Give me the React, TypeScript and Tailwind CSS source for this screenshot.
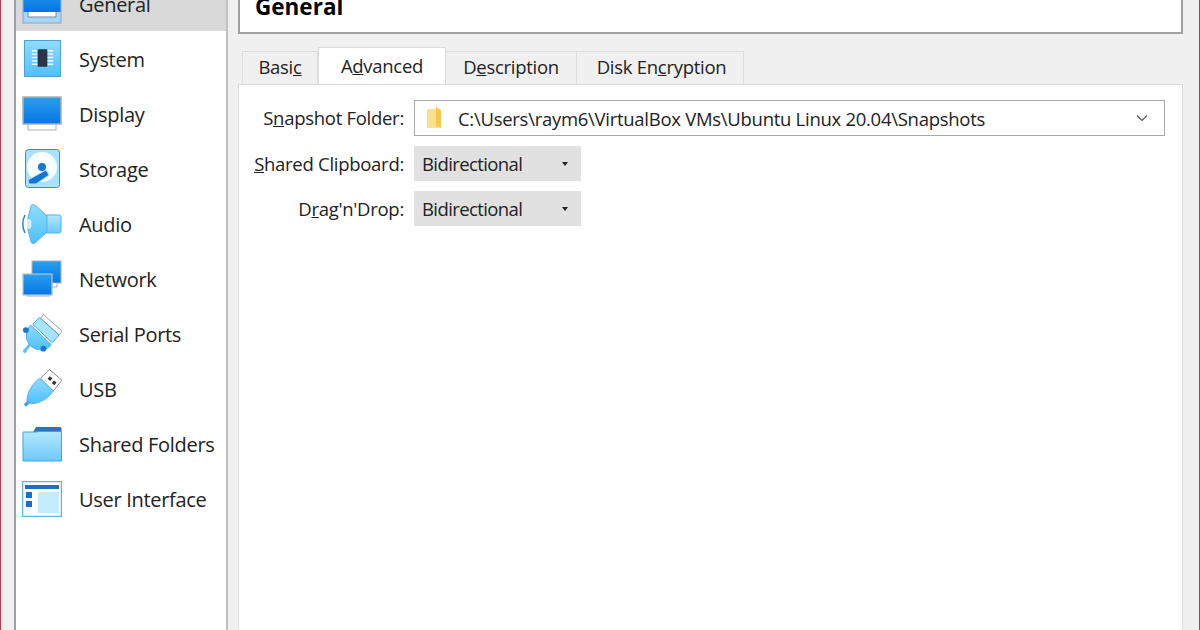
import { ReactNode } from "react";

const FONT = "font-['Open_Sans','Noto_Sans',sans-serif]";

function Defs() {
  return (
    <svg width="0" height="0" className="absolute">
      <defs>
        <linearGradient id="deep" x1="0" y1="0" x2="0" y2="1">
          <stop offset="0" stopColor="#2aa0ee" />
          <stop offset="1" stopColor="#0576e6" />
        </linearGradient>
        <linearGradient id="pale" x1="0" y1="0" x2="0" y2="1">
          <stop offset="0" stopColor="#8fdcff" />
          <stop offset="1" stopColor="#4fc0fb" />
        </linearGradient>
        <linearGradient id="pale2" x1="0" y1="0" x2="0" y2="1">
          <stop offset="0" stopColor="#b4e8ff" />
          <stop offset="1" stopColor="#6cc9fb" />
        </linearGradient>
      </defs>
    </svg>
  );
}

function GeneralIcon() {
  return (
    <svg width="40" height="42" viewBox="0 0 40 42">
      <rect x="1" y="1" width="38" height="39" fill="#a9d6f7" stroke="#8ba6bb" />
      <rect x="1.5" y="1" width="37" height="28" fill="url(#deep)" />
      <path d="M6 29v5h28v-5" fill="#fff" stroke="#6d8ba3" />
    </svg>
  );
}

function SystemIcon() {
  return (
    <svg width="37" height="37" viewBox="0 0 38 38">
      <rect x="0.5" y="0.5" width="37" height="37" fill="url(#pale)" stroke="#4a9fd8" />
      <path d="M8 11h22M8 14.5h22M8 18h22M8 21.5h22M8 25h22" stroke="#f4fbff" strokeWidth="1.5" />
      <rect x="14" y="9.5" width="10" height="18" rx="1" fill="#2a3442" />
    </svg>
  );
}

function DisplayIcon() {
  return (
    <svg width="40" height="35" viewBox="0 0 40 35">
      <rect x="6" y="27" width="28" height="7" fill="#fff" stroke="#a9b0b5" />
      <rect x="1" y="1" width="38" height="27" fill="url(#deep)" stroke="#a9b0b5" strokeWidth="1.5" />
    </svg>
  );
}

function StorageIcon() {
  return (
    <svg width="35" height="39" viewBox="0 0 35 39">
      <rect x="0.5" y="0.5" width="34" height="38" rx="3" fill="#a8e2ff" stroke="#2f8fd8" />
      <circle cx="17" cy="18" r="15" fill="#f8fdff" />
      <circle cx="17" cy="18" r="4" fill="#1677d2" />
      <path d="M3 31 L21 21 L24 26 L11 35 H4 Z" fill="#1677d2" stroke="#a8e2ff" />
    </svg>
  );
}

function AudioIcon() {
  return (
    <svg width="40" height="40" viewBox="0 0 40 40">
      <path d="M3 11 C0 17 0 23 3 29" fill="none" stroke="#2b86d4" strokeWidth="1.5" />
      <path d="M24 11h13a2 2 0 0 1 2 2v14a2 2 0 0 1-2 2H24z" fill="url(#pale2)" stroke="#52b1ee" />
      <path d="M9 2 C10 0 12 0 14 2 L25 12 V28 L14 38 C12 40 10 40 9 38 L6 26 V14Z" fill="url(#pale)" stroke="#52b1ee" />
      <ellipse cx="7" cy="20" rx="2.5" ry="5" fill="#cfefff" />
    </svg>
  );
}

function NetworkIcon() {
  return (
    <svg width="40" height="38" viewBox="0 0 40 38">
      <rect x="10" y="1" width="29" height="22" fill="url(#deep)" stroke="#a9b0b5" />
      <path d="M30 23v4h5v-4" fill="#fff" stroke="#a9b0b5" />
      <rect x="5" y="29" width="22" height="7" fill="#fff" stroke="#a9b0b5" />
      <rect x="1" y="14" width="29" height="21" fill="url(#deep)" stroke="#fff" strokeWidth="0.5" />
      <rect x="1" y="14" width="29" height="21" fill="none" stroke="#a9b0b5" />
    </svg>
  );
}

function SerialIcon() {
  return (
    <svg width="41" height="40" viewBox="0 0 41 40">
      <path d="M22 0 L41 17 L38 21 L19 4Z" fill="#fff" stroke="#9aa5ad" />
      <path d="M18 3 L38 21 L31 29 L11 10Z" fill="#a8e4ff" stroke="#3f9fe0" />
      <path d="M9 11 L30 31 C24 39 12 37 7 30 C3 24 4 16 9 11Z" fill="url(#pale)" stroke="#4aa8e8" />
      <circle cx="4" cy="16" r="3" fill="#1b78d0" />
      <circle cx="22" cy="35" r="3" fill="#1b78d0" />
      <path d="M8 31 L3 37" stroke="#62bff5" strokeWidth="3" />
      <circle cx="3" cy="37.5" r="2" fill="#62bff5" />
    </svg>
  );
}

function UsbIcon() {
  return (
    <svg width="41" height="40" viewBox="0 0 41 40">
      <path d="M28 0 L41 11 L32 22 L19 9Z" fill="#fff" stroke="#7b858c" />
      <rect x="27" y="7" width="3.5" height="3.5" fill="#333" transform="rotate(40 28 9)" />
      <rect x="31" y="12" width="3.5" height="3.5" fill="#333" transform="rotate(40 33 14)" />
      <path d="M18 9 L32 22 C27 30 18 35 9 35 L5 32 C5 24 10 15 18 9Z" fill="url(#pale)" stroke="#5ab6ee" />
      <path d="M7 33 L3 37" stroke="#3ea6ea" strokeWidth="3.5" />
    </svg>
  );
}

function FolderIcon() {
  return (
    <svg width="40" height="36" viewBox="0 0 40 36">
      <path d="M14 1 H38 a1.5 1.5 0 0 1 1.5 1.5 V8 H10Z" fill="#2a72c8" />
      <path d="M1 6 H14 L17 5.5 H39.5 V35 H1Z" fill="url(#pale2)" stroke="#3fa3e6" />
    </svg>
  );
}

function InterfaceIcon() {
  return (
    <svg width="40" height="36" viewBox="0 0 40 36">
      <rect x="0.5" y="0.5" width="39" height="35" fill="#fff" stroke="#62b4ea" strokeWidth="1.5" />
      <rect x="3" y="4" width="34" height="4" fill="#1b6fc4" />
      <rect x="4" y="11" width="6" height="6" fill="#1b6fc4" />
      <rect x="4" y="20" width="6" height="6" fill="#1b6fc4" />
      <rect x="16" y="11" width="21" height="21" fill="#c4ecff" />
    </svg>
  );
}

const items: { label: string; icon: ReactNode; selected?: boolean }[] = [
  { label: "General", icon: <GeneralIcon />, selected: true },
  { label: "System", icon: <SystemIcon /> },
  { label: "Display", icon: <DisplayIcon /> },
  { label: "Storage", icon: <StorageIcon /> },
  { label: "Audio", icon: <AudioIcon /> },
  { label: "Network", icon: <NetworkIcon /> },
  { label: "Serial Ports", icon: <SerialIcon /> },
  { label: "USB", icon: <UsbIcon /> },
  { label: "Shared Folders", icon: <FolderIcon /> },
  { label: "User Interface", icon: <InterfaceIcon /> },
];

function SideItem({ label, icon, selected }: { label: string; icon: ReactNode; selected?: boolean }) {
  return (
    <div className={`flex h-[55px] shrink-0 items-center ${selected ? "bg-[#d9d9d9]" : ""}`}>
      <div className="ml-[6px] mr-[17px] flex w-[40px] shrink-0 justify-center">{icon}</div>
      <span className="pt-[2px] text-[20px] tracking-[-0.3px] text-[#222] whitespace-nowrap">{label}</span>
    </div>
  );
}

function Tab({ children, active, className }: { children: ReactNode; active?: boolean; className: string }) {
  return (
    <div
      className={`flex items-center justify-center border-x border-t border-[#dcdcdc] ${
        active ? "h-[37px] bg-white" : "h-[33px] bg-[#f0f0f0] pb-[2px]"
      } ${className}`}
    >
      {children}
    </div>
  );
}

function Pick() {
  return (
    <div className="flex h-[35px] w-[167px] items-center justify-between bg-[#e1e1e1] pl-[8px] pr-[13px]">
      <span className="pt-[1px] tracking-[-0.6px]">Bidirectional</span>
      <span className="h-0 w-0 border-x-[3px] border-t-[4px] border-x-transparent border-t-[#222]" />
    </div>
  );
}

export default function App() {
  return (
    <div className={`flex h-[630px] w-[1200px] overflow-hidden border-x border-x-[#c8304a] bg-[#f0f0f0] text-[18.5px] tracking-[-0.28px] text-[#222] ${FONT}`}>
      <Defs />
      {/* settings list */}
      <div className="ml-[13px] h-full w-[214px] shrink-0 overflow-hidden border-x-2 border-l-[#9aa0a4] border-r-[#c0c0c0] bg-white">
        <div className="-mt-[24px] flex flex-col">
          {items.map((it) => (
            <SideItem key={it.label} {...it} />
          ))}
        </div>
      </div>

      <div className="ml-[10px] flex h-full w-[945px] shrink-0 flex-col">
        {/* page title */}
        <div className="-mt-[6px] flex h-[40px] shrink-0 items-end border-x-2 border-b-2 border-[#a0a0a0] bg-white pl-[15px]">
          <span className="pb-[10px] text-[22.5px] leading-[30px] font-bold tracking-normal text-black">General</span>
        </div>

        {/* tabs */}
        <div className="mt-[13px] flex h-[37px] shrink-0 items-end pl-[4px]">
          <Tab className="w-[76px]">
            <span>
              Basi<span className="underline">c</span>
            </span>
          </Tab>
          <Tab active className="w-[128px]">
            <span>
              A<span className="underline">d</span>vanced
            </span>
          </Tab>
          <Tab className="w-[131px] border-l-0">
            <span>
              D<span className="underline">e</span>scription
            </span>
          </Tab>
          <Tab className="w-[167px] border-l-0 pl-[3px]">
            <span>
              Disk En<span className="underline">c</span>ryption
            </span>
          </Tab>
        </div>

        {/* tab body */}
        <div className="flex-1 border-x border-t border-[#dcdcdc] bg-white pt-[15px]">
          <div className="grid grid-cols-[165px_751px] gap-x-[10px] gap-y-[10px]">
            <div className="flex h-[36px] items-center justify-end">
              <span>
                S<span className="underline">n</span>apshot Folder:
              </span>
            </div>
            <div className="flex h-[36px] items-center justify-between border border-[#a8a8a8] pl-[10px] pr-[16px]">
              <div className="flex items-center gap-[13px]">
                <svg width="20" height="24" viewBox="0 0 20 24">
                  <path d="M2 3h9l3 2v17H2z" fill="#fbe08f" />
                  <path d="M11 1l5 3v18l-5-2z" fill="#f6c64f" />
                </svg>
                <span className="pt-[1px]">C:\Users\raym6\VirtualBox VMs\Ubuntu Linux 20.04\Snapshots</span>
              </div>
              <svg width="12" height="8" viewBox="0 0 12 8">
                <path d="M1 1.5l5 5 5-5" fill="none" stroke="#555" strokeWidth="1.2" />
              </svg>
            </div>

            <div className="flex h-[35px] items-center justify-end">
              <span className="pt-[1px]">
                <span className="underline">S</span>hared Clipboard:
              </span>
            </div>
            <Pick />

            <div className="flex h-[35px] items-center justify-end">
              <span className="pt-[1px]">
                D<span className="underline">r</span>ag'n'Drop:
              </span>
            </div>
            <Pick />
          </div>
        </div>
      </div>
    </div>
  );
}
